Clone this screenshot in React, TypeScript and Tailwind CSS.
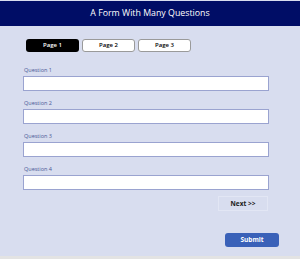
const questions = ['Question 1', 'Question 2', 'Question 3', 'Question 4'];
const pages = ['Page 1', 'Page 2', 'Page 3'];

export default function App() {
  return (
    <div className="flex h-[259px] w-[300px] flex-col bg-[#e3e3e3] font-['Open_Sans',sans-serif]">
      <div className="flex h-[256px] flex-col bg-[#d8ddef]">
        {/* header */}
        <div className="mt-px flex h-[25px] items-center justify-center bg-[#000d66] text-[8.8px] text-white">
          A Form With Many Questions
        </div>

        {/* page tabs */}
        <div className="ml-[26px] mt-[13px] flex gap-[3px]">
          {pages.map((p, i) => (
            <div
              key={p}
              className={
                i === 0
                  ? 'flex h-[13px] w-[53px] items-center justify-center rounded-[3px] bg-black text-[6px] font-semibold text-white'
                  : 'flex h-[13px] w-[53px] items-center justify-center rounded-[3px] border border-[#9a9a9a] bg-white text-[6px] font-semibold text-black'
              }
            >
              {p}
            </div>
          ))}
        </div>

        {/* questions */}
        <div className="mt-[14px] flex flex-col gap-[8px] px-[23px] pr-[31px]">
          {questions.map(q => (
            <div key={q} className="flex flex-col">
              <span className="h-[8px] pl-[1px] text-[5.5px] leading-[8px] text-[#4a5896]">{q}</span>
              <div className="mt-[2px] h-[15px] border border-[#9aa3d0] bg-white" />
            </div>
          ))}
        </div>

        {/* next */}
        <div className="mt-[6px] flex justify-end pr-[32px]">
          <div className="flex h-[15px] w-[50px] items-center justify-center border border-[#e2e6f4] text-[6.5px] font-bold text-[#1a1a1a]">
            Next &gt;&gt;
          </div>
        </div>

        {/* submit */}
        <div className="mt-[22px] flex justify-end pr-[21px]">
          <div className="flex h-[14px] w-[54px] items-center justify-center rounded-[3px] bg-[#3a61b8] text-[6.5px] font-bold text-white">
            Submit
          </div>
        </div>
      </div>
    </div>
  );
}
